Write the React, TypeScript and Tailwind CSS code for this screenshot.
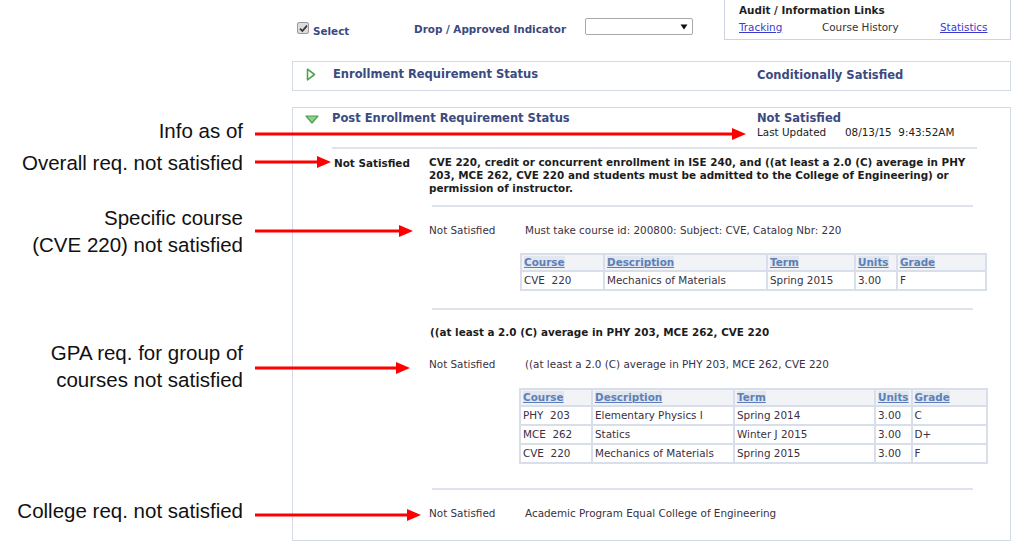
import React from "react";

const FONT = { fontFamily: '"DejaVu Sans", Verdana, sans-serif' };

function Check() {
  return (
    <span className="inline-flex h-[12px] w-[12px] items-center justify-center rounded-[2px] border border-[#9a9a9a] bg-[#dcdcdc]">
      <svg width="9" height="9" viewBox="0 0 9 9">
        <path d="M1 4.6 L3.4 7 L8 1.6" fill="none" stroke="#333" strokeWidth="1.7" />
      </svg>
    </span>
  );
}

function TriRight() {
  return (
    <svg width="10" height="13" viewBox="0 0 10 13">
      <path d="M1.5 1.2 L8.5 6.5 L1.5 11.8 Z" fill="#fff" stroke="#4ea24e" strokeWidth="1.6" strokeLinejoin="round" />
    </svg>
  );
}

function TriDown() {
  return (
    <svg width="14" height="9" viewBox="0 0 14 9">
      <path d="M1 1 L13 1 L7 8 Z" fill="#8fd08f" stroke="#4e9e4e" strokeWidth="1.2" strokeLinejoin="round" />
    </svg>
  );
}

type Col = { h: string; w: number };

function CourseTable({ cols, rows }: { cols: Col[]; rows: string[][] }) {
  return (
    <table className="border-collapse border-2 border-[#d9dfea] text-[10.4px] leading-[13px] text-[#3a3142]">
      <thead>
        <tr className="h-[17px] bg-[#f1f3f7]">
          {cols.map((c) => (
            <th
              key={c.h}
              style={{ width: c.w }}
              className="border-2 border-[#d9dfea] px-[2px] text-left align-middle font-bold"
            >
              <span className="bg-[#e1e6ef] text-[#5d7fb9] underline">{c.h}</span>
            </th>
          ))}
        </tr>
      </thead>
      <tbody>
        {rows.map((r, i) => (
          <tr key={i} className="h-[19px]">
            {r.map((v, j) => (
              <td key={j} className="border-2 border-[#d9dfea] px-[2px] align-middle whitespace-pre">
                {v}
              </td>
            ))}
          </tr>
        ))}
      </tbody>
    </table>
  );
}

function Hr({ ml, w, mt }: { ml: string; w: string; mt: string }) {
  return <div className={`h-[2px] bg-[#dfe3ec] ${ml} ${w} ${mt}`} />;
}

export default function App() {
  return (
    <div className="relative h-[549px] w-[1024px] overflow-hidden bg-white" style={FONT}>
      {/* page content */}
      <div className="ml-[292px] w-[719px]">
        {/* top controls */}
        <div className="flex h-[40px] items-start">
          <div className="ml-[5px] mt-[22px] flex w-[117px] items-start gap-[4px]">
            <Check />
            <span className="mt-[3px] text-[10.4px] font-bold leading-[13px] text-[#3b4a80]">Select</span>
          </div>
          <div className="mt-[23px] w-[171px] text-[10.4px] font-bold leading-[13px] text-[#3b4a80]">
            Drop / Approved Indicator
          </div>
          <div className="mt-[18px] flex h-[17px] w-[108px] items-center justify-end rounded-[2px] border border-[#a9a9a9] bg-white pr-[4px]">
            <svg width="8" height="6" viewBox="0 0 8 6">
              <path d="M0.5 0.5 L7.5 0.5 L4 5.5 Z" fill="#111" />
            </svg>
          </div>
          <div className="ml-[31px] mt-[-1px] h-[41px] w-[287px] border border-[#cdd3e0] px-[14px] pt-[4px]">
            <div className="text-[10.4px] font-bold leading-[13px] text-[#1f1f1f]">Audit / Information Links</div>
            <div className="mt-[4px] flex text-[10.4px] leading-[13px]">
              <span className="w-[83px] text-[#3a3ad0] underline">Tracking</span>
              <span className="w-[118px] text-[#333]">Course History</span>
              <span className="text-[#3a3ad0] underline">Statistics</span>
            </div>
          </div>
        </div>

        {/* Enrollment Requirement Status */}
        <div className="mt-[21px] flex h-[30px] items-start border border-[#d3d9e5] pt-[5px]">
          <div className="ml-[13px] mt-[1px] w-[27px]">
            <TriRight />
          </div>
          <div className="w-[424px] text-[11.5px] font-bold leading-[14px] text-[#3b4a80]">
            Enrollment Requirement Status
          </div>
          <div className="mt-[1px] text-[11.5px] font-bold leading-[14px] text-[#3b4a80]">Conditionally Satisfied</div>
        </div>

        {/* Post Enrollment Requirement Status */}
        <div className="mt-[16px] h-[434px] border border-[#d3d9e5] text-[10.4px] leading-[13px] text-[#3a3142]">
          <div className="mt-[3px] flex items-start">
            <div className="ml-[12px] mt-[4px] w-[27px]">
              <TriDown />
            </div>
            <div className="w-[425px] text-[11.5px] font-bold leading-[14px] text-[#3b4a80]">
              Post Enrollment Requirement Status
            </div>
            <div>
              <div className="text-[11.5px] font-bold leading-[14px] text-[#3b4a80]">Not Satisfied</div>
              <div className="mt-[1px] flex text-[#222]">
                <span className="w-[88px]">Last Updated</span>
                <span className="whitespace-pre">08/13/15  9:43:52AM</span>
              </div>
            </div>
          </div>

          <Hr ml="ml-[39px]" w="w-[645px]" mt="mt-[8px]" />

          <div className="mt-[7px] flex">
            <div className="ml-[41px] mt-[1px] w-[95px] font-bold text-[#1c1c1c]">Not Satisfied</div>
            <div className="font-bold whitespace-nowrap text-[#1c1c1c]">
              CVE 220, credit or concurrent enrollment in ISE 240, and ((at least a 2.0 (C) average in PHY
              <br />
              203, MCE 262, CVE 220 and students must be admitted to the College of Engineering) or
              <br />
              permission of instructor.
            </div>
          </div>

          <Hr ml="ml-[139px]" w="w-[541px]" mt="mt-[10px]" />

          <div className="mt-[17px] flex">
            <div className="ml-[136px] w-[96px]">Not Satisfied</div>
            <div>Must take course id: 200800: Subject: CVE, Catalog Nbr: 220</div>
          </div>

          <div className="ml-[227px] mt-[16px]">
            <CourseTable
              cols={[
                { h: "Course", w: 83 },
                { h: "Description", w: 163 },
                { h: "Term", w: 88 },
                { h: "Units", w: 42 },
                { h: "Grade", w: 89 },
              ]}
              rows={[["CVE  220", "Mechanics of Materials", "Spring 2015", "3.00", "F"]]}
            />
          </div>

          <Hr ml="ml-[139px]" w="w-[541px]" mt="mt-[17px]" />

          <div className="ml-[137px] mt-[16px] font-bold text-[#1c1c1c]">
            ((at least a 2.0 (C) average in PHY 203, MCE 262, CVE 220
          </div>

          <div className="mt-[19px] flex">
            <div className="ml-[136px] w-[96px]">Not Satisfied</div>
            <div>((at least a 2.0 (C) average in PHY 203, MCE 262, CVE 220</div>
          </div>

          <div className="ml-[226px] mt-[17px]">
            <CourseTable
              cols={[
                { h: "Course", w: 72 },
                { h: "Description", w: 142 },
                { h: "Term", w: 141 },
                { h: "Units", w: 36 },
                { h: "Grade", w: 75 },
              ]}
              rows={[
                ["PHY  203", "Elementary Physics I", "Spring 2014", "3.00", "C"],
                ["MCE  262", "Statics", "Winter J 2015", "3.00", "D+"],
                ["CVE  220", "Mechanics of Materials", "Spring 2015", "3.00", "F"],
              ]}
            />
          </div>

          <Hr ml="ml-[139px]" w="w-[541px]" mt="mt-[24px]" />

          <div className="mt-[17px] flex">
            <div className="ml-[136px] w-[96px]">Not Satisfied</div>
            <div>Academic Program Equal College of Engineering</div>
          </div>
        </div>
      </div>

      {/* annotation labels */}
      <div
        className="pointer-events-none absolute left-0 top-0 w-[243px] text-right text-[20.5px] leading-[27px] text-[#111]"
        style={{ fontFamily: '"Liberation Sans", Arial, sans-serif' }}
      >
        <div className="absolute right-0 top-[117px] whitespace-nowrap">Info as of</div>
        <div className="absolute right-0 top-[149px] whitespace-nowrap">Overall req. not satisfied</div>
        <div className="absolute right-0 top-[204px] whitespace-nowrap">
          Specific course
          <br />
          (CVE 220) not satisfied
        </div>
        <div className="absolute right-0 top-[339px] whitespace-nowrap">
          GPA req. for group of
          <br />
          courses not satisfied
        </div>
        <div className="absolute right-0 top-[497px] whitespace-nowrap">College req. not satisfied</div>
      </div>

      {/* annotation arrows */}
      <svg className="pointer-events-none absolute left-0 top-0" width="1024" height="549" viewBox="0 0 1024 549">
        {[
          { y: 134, x: 746 },
          { y: 162, x: 331 },
          { y: 231, x: 413 },
          { y: 368, x: 410 },
          { y: 515, x: 421 },
        ].map((a, i) => (
          <g key={i}>
            <line x1="255" y1={a.y} x2={a.x - 12} y2={a.y} stroke="#ff0000" strokeWidth="3.2" />
            <path d={`M${a.x - 14} ${a.y - 6} L${a.x} ${a.y} L${a.x - 14} ${a.y + 6} Z`} fill="#ff0000" />
          </g>
        ))}
      </svg>
    </div>
  );
}
